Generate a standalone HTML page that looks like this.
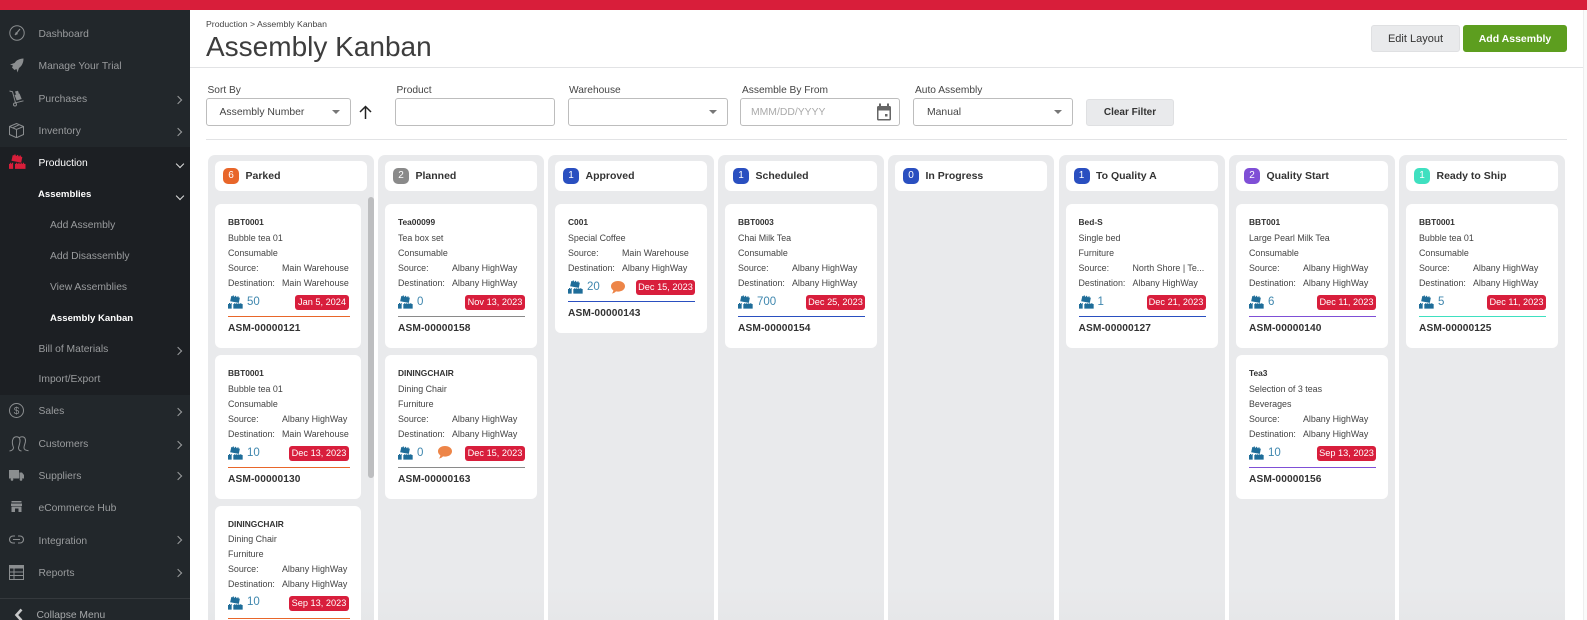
<!DOCTYPE html>
<html><head><meta charset="utf-8"><style>
*{box-sizing:border-box}
html,body{margin:0;padding:0;width:1587px;height:620px;overflow:hidden;background:#fff;font-family:"Liberation Sans",sans-serif;color:#333}
.abs,.s,.ic,.ch,.lb,.col,.f,.btn{position:absolute}
#top{position:absolute;left:0;top:0;width:1587px;height:10px;background:#d81e3a}
#side{position:absolute;left:0;top:10px;width:190px;height:610px;background:#22272b;overflow:hidden}
#act{position:absolute;left:0;top:137px;width:190px;height:248px;background:#1c1f23}
.s{left:38.5px;font-size:10.3px;line-height:14px;color:#9a9c9e;white-space:nowrap;margin-top:1px}
.w{color:#fff}.d{left:50px}.g{color:#aaacae}
.ch{width:6px;height:6px;border-right:1px solid #9a9c9e;border-top:1px solid #9a9c9e;transform:rotate(45deg);left:175px}
.cd{transform:rotate(135deg);border-color:#ddd;left:177px}
.ic{left:8px;width:18px;height:18px;fill:none;stroke:#8b8e90;stroke-width:1}
.ic .fl{fill:#8b8e90;stroke:none}
#col{position:absolute;left:0;top:588px;width:190px;height:32px;background:#22272b;border-top:1px solid #35393d}
.hl{position:absolute;background:#e2e3e5;height:1px}
.lb{font-size:10.2px;line-height:12px;color:#444;top:85px;white-space:nowrap}
.f{top:98px;height:28px;border:1px solid #bdbdbd;border-radius:3px;background:#fff;font-size:10.4px;line-height:28px;color:#444;padding-left:13px;white-space:nowrap}
.tri{position:absolute;right:10px;top:11px;border-left:4px solid transparent;border-right:4px solid transparent;border-top:4px solid #777}
.btn{background:#e9eaec;border:1px solid #dfe0e2;border-radius:3px;text-align:center;font-size:10px;font-weight:bold;color:#333;white-space:nowrap}
.col{top:155px;width:166px;height:465px;background:linear-gradient(#e9eaec 0,#e9eaec 430px,#e6e7e9 465px);border-radius:7px 7px 0 0;overflow:hidden}
.hd{position:absolute;left:7px;top:6px;width:152px;height:30px;background:#fff;border-radius:6px;font-size:10.5px;font-weight:bold;line-height:30px;color:#333;padding-left:30.5px;white-space:nowrap}
.bd{position:absolute;left:8px;top:7px;width:16px;height:16px;border-radius:5px;color:#fff;font-size:10px;font-weight:normal;line-height:16px;text-align:center}
.card{position:absolute;left:7px;width:152px;height:144px;background:#fff;border-radius:6px;font-size:8.9px;line-height:15px;color:#444}
.card>*{position:absolute;left:13px;white-space:nowrap}
.c{top:11px;font-weight:bold;color:#333;font-size:8.4px}
.n{top:27px}.t{top:42px}.so{top:57px}.de{top:72px}
.so u,.de u{text-decoration:none;position:absolute;left:54px}
.li{position:absolute;top:112px;width:122px;height:1px}
.as{top:117px;font-size:10.2px;font-weight:bold;color:#333;letter-spacing:.1px}
.lg{top:91px;width:16px;height:14px;fill:#1f6d99}
.q{top:91px;left:32px!important;font-size:11.5px;color:#3f87ae;line-height:15px}
.dt{top:91px;height:14.5px;background:#d81e3c;color:#fff;font-size:9.2px;line-height:14.5px;border-radius:3px;padding:0;text-align:center}
.cm{top:90px;width:14px;height:13px;fill:#ed8548}
</style></head><body>
<svg width="0" height="0" style="position:absolute"><defs>
<g id="lego"><path d="M0 27h3v-3h3v3h2v-3h3v17H0zM16 27h3v-3h3v3h3v-3h3v3h3v-3h3v3h3v-3h3v3h4v14H16z"/><path d="M10 3l4 .8.5-2.800 3.500.7-.5 2.800 3.500.7.5-2.800 3.500.7-.5 2.800 3.500.7.5-2.800 3.500.7-.5 2.800 4 .8-3 15.500-26-5z"/></g>
</defs></svg>
<div id="top"></div>
<div class="abs" style="left:1583px;top:10px;width:4px;height:610px;background:#fafafa;border-left:1px solid #eee"></div>
<div id="side">
<div id="act"></div>
<div class="s" style="top:17px">Dashboard</div>
<div class="s" style="top:49px">Manage Your Trial</div>
<div class="s" style="top:82px">Purchases</div>
<div class="s" style="top:114px">Inventory</div>
<div class="s w" style="top:146px">Production</div>
<div class="s w" style="top:177px;font-weight:bold;font-size:9.6px;left:38px">Assemblies</div>
<div class="s d" style="top:208px">Add Assembly</div>
<div class="s d" style="top:239px">Add Disassembly</div>
<div class="s d" style="top:270px">View Assemblies</div>
<div class="s d w" style="top:301px;font-weight:bold;font-size:9.6px">Assembly Kanban</div>
<div class="s" style="top:332px">Bill of Materials</div>
<div class="s" style="top:362px">Import/Export</div>
<div class="s" style="top:394px">Sales</div>
<div class="s" style="top:427px">Customers</div>
<div class="s" style="top:459px">Suppliers</div>
<div class="s" style="top:491px">eCommerce Hub</div>
<div class="s" style="top:524px">Integration</div>
<div class="s" style="top:556px">Reports</div>
<div class="ch" style="top:87px"></div><div class="ch" style="top:119px"></div>
<div class="ch cd" style="top:151px"></div><div class="ch cd" style="top:183px"></div>
<div class="ch" style="top:338px"></div><div class="ch" style="top:399px"></div><div class="ch" style="top:432px"></div><div class="ch" style="top:463px"></div><div class="ch" style="top:527px"></div><div class="ch" style="top:560px"></div>
<svg class="ic" style="top:15px;width:16px;height:16px;left:9px" viewBox="0 0 16 16"><circle cx="8" cy="8" r="7.200"/><path d="M6 10l5-6" stroke-width="1.200"/><circle class="fl" cx="7.500" cy="8.500" r="1.200"/></svg>
<svg class="ic" style="top:48px;left:9px;width:15px;height:15px" viewBox="0 0 15 15"><path class="fl" d="M14.500.5c-4 .2-7 1.500-9 4.500l-4.500 1.500 3 1-1 2 2.500 2.500 2-1 1 3.500 1.500-4.500c3-2.200 4.500-5.500 4.500-9.500z"/></svg>
<svg class="ic" style="top:80px;left:9px;width:16px;height:17px" viewBox="0 0 16 17"><path d="M.5 1l3 .8 3 11 8-2"/><circle cx="6" cy="14.500" r="1.500"/><path class="fl" d="M5.500 5l5-1.500 2.200 5.500-5 1.500z"/><path class="fl" d="M6 1.500l3-.8 1 3-3 .8z"/></svg>
<svg class="ic" style="top:113px;left:9px;width:15px;height:15px" viewBox="0 0 15 15"><path d="M.5 3.500l7-3 7 3v8l-7 3.200-7-3.200zM.5 3.500l7 3 7-3M7.500 6.500v8M10 1.800l-6 2.800"/></svg>
<svg class="ic" style="top:144px;left:9px;height:15px" viewBox="0 0 48 40"><use href="#lego" fill="#d81e3a" style="stroke:none" transform="scale(1 .97)"/></svg>
<svg class="ic" style="top:393px;left:9px;width:15px;height:15px" viewBox="0 0 15 15"><circle cx="7.500" cy="7.500" r="7"/><text x="7.500" y="11" font-size="10" text-anchor="middle" fill="#8b8e90" stroke="none" font-family="Liberation Sans">$</text></svg>
<svg class="ic" style="top:426px;left:9px;width:20px;height:16px" viewBox="0 0 20 16"><path d="M.5 15c3-.5 4-1.500 4-3.500C3.500 9 3 7 3.500 4.500 4 2 5.500 .7 7.500 .7c2 0 3.500 1.300 3.500 4 0 2.500-1 4.800-1.500 7 0 2 1 3 3 3.300M10 2c1-1 2-1.300 3-1.300 2 0 3.500 1.300 3.500 4 0 2.500-1.500 4.500-1.500 7 0 2 1.500 2.500 4.500 3"/></svg>
<svg class="ic" style="top:460px;left:9px;width:15px;height:11px" viewBox="0 0 15 11"><path class="fl" d="M0 0h10v8.500H0zM10.500 2.500H13l2 2.500v3.500h-4.500z"/><circle class="fl" cx="3" cy="9.500" r="1.300"/><circle class="fl" cx="12" cy="9.500" r="1.300"/></svg>
<svg class="ic" style="top:491px;left:11px;width:11px;height:11px" viewBox="0 0 11 11"><path class="fl" d="M.5 0h10v1.500H.5zM0 2.500h11v2.500H0zM.5 5.500h10V11h-3V7.500H4V11H.5z"/></svg>
<svg class="ic" style="top:525px;left:9px;width:15px;height:9px" viewBox="0 0 15 9"><path d="M6 1H4a3.500 3.500 0 0 0 0 7h2M9 1h2a3.500 3.500 0 0 1 0 7H9M4 4.500h7" stroke-width="1.100"/></svg>
<svg class="ic" style="top:555px;left:9px;width:15px;height:15px" viewBox="0 0 15 15"><path class="fl" d="M0 0h15v3.500H0z"/><path d="M.5 3.500v11h14v-11M.5 7h14M.5 10.500h14M5 3.500v11"/></svg>
<div id="col"><svg style="position:absolute;left:14px;top:9px" width="9" height="14" viewBox="0 0 9 14"><path d="M7.500 1.500L2.500 7l5 5.500" fill="none" stroke="#c8c9ca" stroke-width="2.600"/></svg><div class="s" style="left:36.500px;top:9px;color:#a6a8aa">Collapse Menu</div></div>
</div>

<div class="abs" style="left:206px;top:18px;font-size:8.700px;line-height:12px;color:#444;white-space:nowrap">Production &gt; Assembly Kanban</div>
<div class="abs" style="left:206px;top:30px;font-size:28px;line-height:34px;color:#3d3d3d;white-space:nowrap">Assembly Kanban</div>
<div class="btn" style="left:1371px;top:25px;width:89px;height:27px;line-height:26px;font-weight:normal;font-size:11px">Edit Layout</div>
<div class="btn" style="left:1463px;top:25px;width:104px;height:27px;line-height:26px;background:#5d9e1f;border-color:#5d9e1f;color:#fff;font-size:10.500px">Add Assembly</div>
<div class="hl" style="left:190px;top:67px;width:1393px"></div>
<div class="lb" style="left:207.500px">Sort By</div>
<div class="lb" style="left:396.500px">Product</div>
<div class="lb" style="left:569px">Warehouse</div>
<div class="lb" style="left:742px">Assemble By From</div>
<div class="lb" style="left:915px">Auto Assembly</div>
<div class="f" style="left:205.500px;width:145px">Assembly Number<span class="tri"></span></div>
<svg class="abs" style="left:359px;top:105px" width="13" height="14" viewBox="0 0 13 14"><path d="M6.500 14V1.500M1 7l5.500-5.500L12 7" fill="none" stroke="#222" stroke-width="1.500"/></svg>
<div class="f" style="left:395px;width:160px"></div>
<div class="f" style="left:568px;width:160px"><span class="tri"></span></div>
<div class="f" style="left:740px;width:160px;padding-left:10px;color:#aaa">MMM/DD/YYYY<svg style="position:absolute;left:135px;top:4px" width="16" height="18" viewBox="0 0 16 18"><path d="M2 3h12a1.500 1.500 0 0 1 1 1.500V16a1.500 1.500 0 0 1-1 1.500H2A1.500 1.500 0 0 1 1 16V4.500A1.500 1.500 0 0 1 2 3zM3 .5h2V3H3zM11 .5h2V3h-2zM2.500 7.500v8.500h11V7.500zM9 11h2.500v2.500H9z" fill="#666" fill-rule="evenodd"/></svg></div>
<div class="f" style="left:913px;width:160px">Manual<span class="tri"></span></div>
<div class="btn" style="left:1086px;top:99px;width:88px;height:27px;line-height:25px">Clear Filter</div>
<div class="hl" style="left:206px;top:139px;width:1361px"></div>

<div class="col" style="left:208px">
<div class="hd"><span class="bd" style="background:#e8662a">6</span>Parked</div>
<div style="position:absolute;left:160px;top:42px;width:6px;height:281px;background:#bdbec0;border-radius:3px"></div>
<div class="card" style="top:49px;width:146px"><div class="c">BBT0001</div><div class="n">Bubble tea 01</div><div class="t">Consumable</div><div class="so">Source:<u>Main Warehouse</u></div><div class="de">Destination:<u>Main Warehouse</u></div><svg class="lg" viewBox="0 0 48 42"><use href="#lego"/></svg><div class="q">50</div><div class="dt" style="left:80px;width:54px">Jan 5, 2024</div><span class="li" style="background:#e8662a"></span><div class="as">ASM-00000121</div></div>
<div class="card" style="top:200px;width:146px"><div class="c">BBT0001</div><div class="n">Bubble tea 01</div><div class="t">Consumable</div><div class="so">Source:<u>Albany HighWay</u></div><div class="de">Destination:<u>Main Warehouse</u></div><svg class="lg" viewBox="0 0 48 42"><use href="#lego"/></svg><div class="q">10</div><div class="dt" style="left:74px;width:60px">Dec 13, 2023</div><span class="li" style="background:#e8662a"></span><div class="as">ASM-00000130</div></div>
<div class="card" style="top:351px;width:146px"><div class="c">DININGCHAIR</div><div class="n" style="top:26px">Dining Chair</div><div class="t" style="top:41px">Furniture</div><div class="so" style="top:56px">Source:<u>Albany HighWay</u></div><div class="de" style="top:71px">Destination:<u>Albany HighWay</u></div><svg class="lg" style="top:90px" viewBox="0 0 48 42"><use href="#lego"/></svg><div class="q" style="top:89px">10</div><div class="dt" style="left:74px;width:60px;top:90px">Sep 13, 2023</div><span class="li" style="background:#e8662a;top:112px"></span></div>
</div>

<div class="col" style="left:378px">
<div class="hd"><span class="bd" style="background:#8a8a8a">2</span>Planned</div>
<div class="card" style="top:49px"><div class="c">Tea00099</div><div class="n">Tea box set</div><div class="t">Consumable</div><div class="so">Source:<u>Albany HighWay</u></div><div class="de">Destination:<u>Albany HighWay</u></div><svg class="lg" viewBox="0 0 48 42"><use href="#lego"/></svg><div class="q">0</div><div class="dt" style="left:80px;width:60px">Nov 13, 2023</div><span class="li" style="background:#8a8a8a;width:127px"></span><div class="as">ASM-00000158</div></div>
<div class="card" style="top:200px"><div class="c">DININGCHAIR</div><div class="n">Dining Chair</div><div class="t">Furniture</div><div class="so">Source:<u>Albany HighWay</u></div><div class="de">Destination:<u>Albany HighWay</u></div><svg class="lg" viewBox="0 0 48 42"><use href="#lego"/></svg><div class="q">0</div><svg class="cm" style="left:53px;top:91px" viewBox="0 0 14 13"><path d="M7 0c4 0 7 2.200 7 5.300s-3 5.300-7 5.300c-.7 0-1.300 0-2-.2C4 11.500 2.500 12.500 .8 12.500c1-1 1.500-2 1.500-3.200C.8 8.300 0 7 0 5.300 0 2.200 3 0 7 0z"/></svg><div class="dt" style="left:80px;width:60px">Dec 15, 2023</div><span class="li" style="background:#8a8a8a;width:127px"></span><div class="as">ASM-00000163</div></div>
</div>

<div class="col" style="left:548px">
<div class="hd"><span class="bd" style="background:#2a4fc0">1</span>Approved</div>
<div class="card" style="top:49px;height:129px"><div class="c">C001</div><div class="n">Special Coffee</div><div class="so" style="top:42px">Source:<u>Main Warehouse</u></div><div class="de" style="top:57px">Destination:<u>Albany HighWay</u></div><svg class="lg" style="top:76px" viewBox="0 0 48 42"><use href="#lego"/></svg><div class="q" style="top:76px">20</div><svg class="cm" style="left:56px;top:77px" viewBox="0 0 14 13"><path d="M7 0c4 0 7 2.200 7 5.300s-3 5.300-7 5.300c-.7 0-1.300 0-2-.2C4 11.500 2.500 12.500 .8 12.500c1-1 1.500-2 1.500-3.200C.8 8.300 0 7 0 5.300 0 2.200 3 0 7 0z"/></svg><div class="dt" style="left:81px;width:59px;top:76px">Dec 15, 2023</div><span class="li" style="background:#2a4fc0;width:127px;top:97px"></span><div class="as" style="top:102px">ASM-00000143</div></div>
</div>

<div class="col" style="left:718px">
<div class="hd"><span class="bd" style="background:#2a4fc0">1</span>Scheduled</div>
<div class="card" style="top:49px"><div class="c">BBT0003</div><div class="n">Chai Milk Tea</div><div class="t">Consumable</div><div class="so">Source:<u>Albany HighWay</u></div><div class="de">Destination:<u>Albany HighWay</u></div><svg class="lg" viewBox="0 0 48 42"><use href="#lego"/></svg><div class="q">700</div><div class="dt" style="left:81px;width:59px">Dec 25, 2023</div><span class="li" style="background:#2a4fc0;width:127px"></span><div class="as">ASM-00000154</div></div>
</div>

<div class="col" style="left:888px">
<div class="hd"><span class="bd" style="background:#2a4fc0">0</span>In Progress</div>
</div>

<div class="col" style="left:1058.500px">
<div class="hd"><span class="bd" style="background:#2a4fc0">1</span>To Quality A</div>
<div class="card" style="top:49px"><div class="c">Bed-S</div><div class="n">Single bed</div><div class="t">Furniture</div><div class="so">Source:<u>North Shore | Te...</u></div><div class="de">Destination:<u>Albany HighWay</u></div><svg class="lg" viewBox="0 0 48 42"><use href="#lego"/></svg><div class="q">1</div><div class="dt" style="left:81px;width:59px">Dec 21, 2023</div><span class="li" style="background:#2a4fc0;width:127px"></span><div class="as">ASM-00000127</div></div>
</div>

<div class="col" style="left:1229px">
<div class="hd"><span class="bd" style="background:#7f4fd6">2</span>Quality Start</div>
<div class="card" style="top:49px"><div class="c">BBT001</div><div class="n">Large Pearl Milk Tea</div><div class="t">Consumable</div><div class="so">Source:<u>Albany HighWay</u></div><div class="de">Destination:<u>Albany HighWay</u></div><svg class="lg" viewBox="0 0 48 42"><use href="#lego"/></svg><div class="q">6</div><div class="dt" style="left:81px;width:59px">Dec 11, 2023</div><span class="li" style="background:#7f4fd6;width:127px"></span><div class="as">ASM-00000140</div></div>
<div class="card" style="top:200px"><div class="c">Tea3</div><div class="n">Selection of 3 teas</div><div class="t">Beverages</div><div class="so">Source:<u>Albany HighWay</u></div><div class="de">Destination:<u>Albany HighWay</u></div><svg class="lg" viewBox="0 0 48 42"><use href="#lego"/></svg><div class="q">10</div><div class="dt" style="left:81px;width:59px">Sep 13, 2023</div><span class="li" style="background:#7f4fd6;width:127px"></span><div class="as">ASM-00000156</div></div>
</div>

<div class="col" style="left:1399px">
<div class="hd"><span class="bd" style="background:#3fe0c0">1</span>Ready to Ship</div>
<div class="card" style="top:49px"><div class="c">BBT0001</div><div class="n">Bubble tea 01</div><div class="t">Consumable</div><div class="so">Source:<u>Albany HighWay</u></div><div class="de">Destination:<u>Albany HighWay</u></div><svg class="lg" viewBox="0 0 48 42"><use href="#lego"/></svg><div class="q">5</div><div class="dt" style="left:81px;width:59px">Dec 11, 2023</div><span class="li" style="background:#3fe0c0;width:127px"></span><div class="as">ASM-00000125</div></div>
</div>
</body></html>
